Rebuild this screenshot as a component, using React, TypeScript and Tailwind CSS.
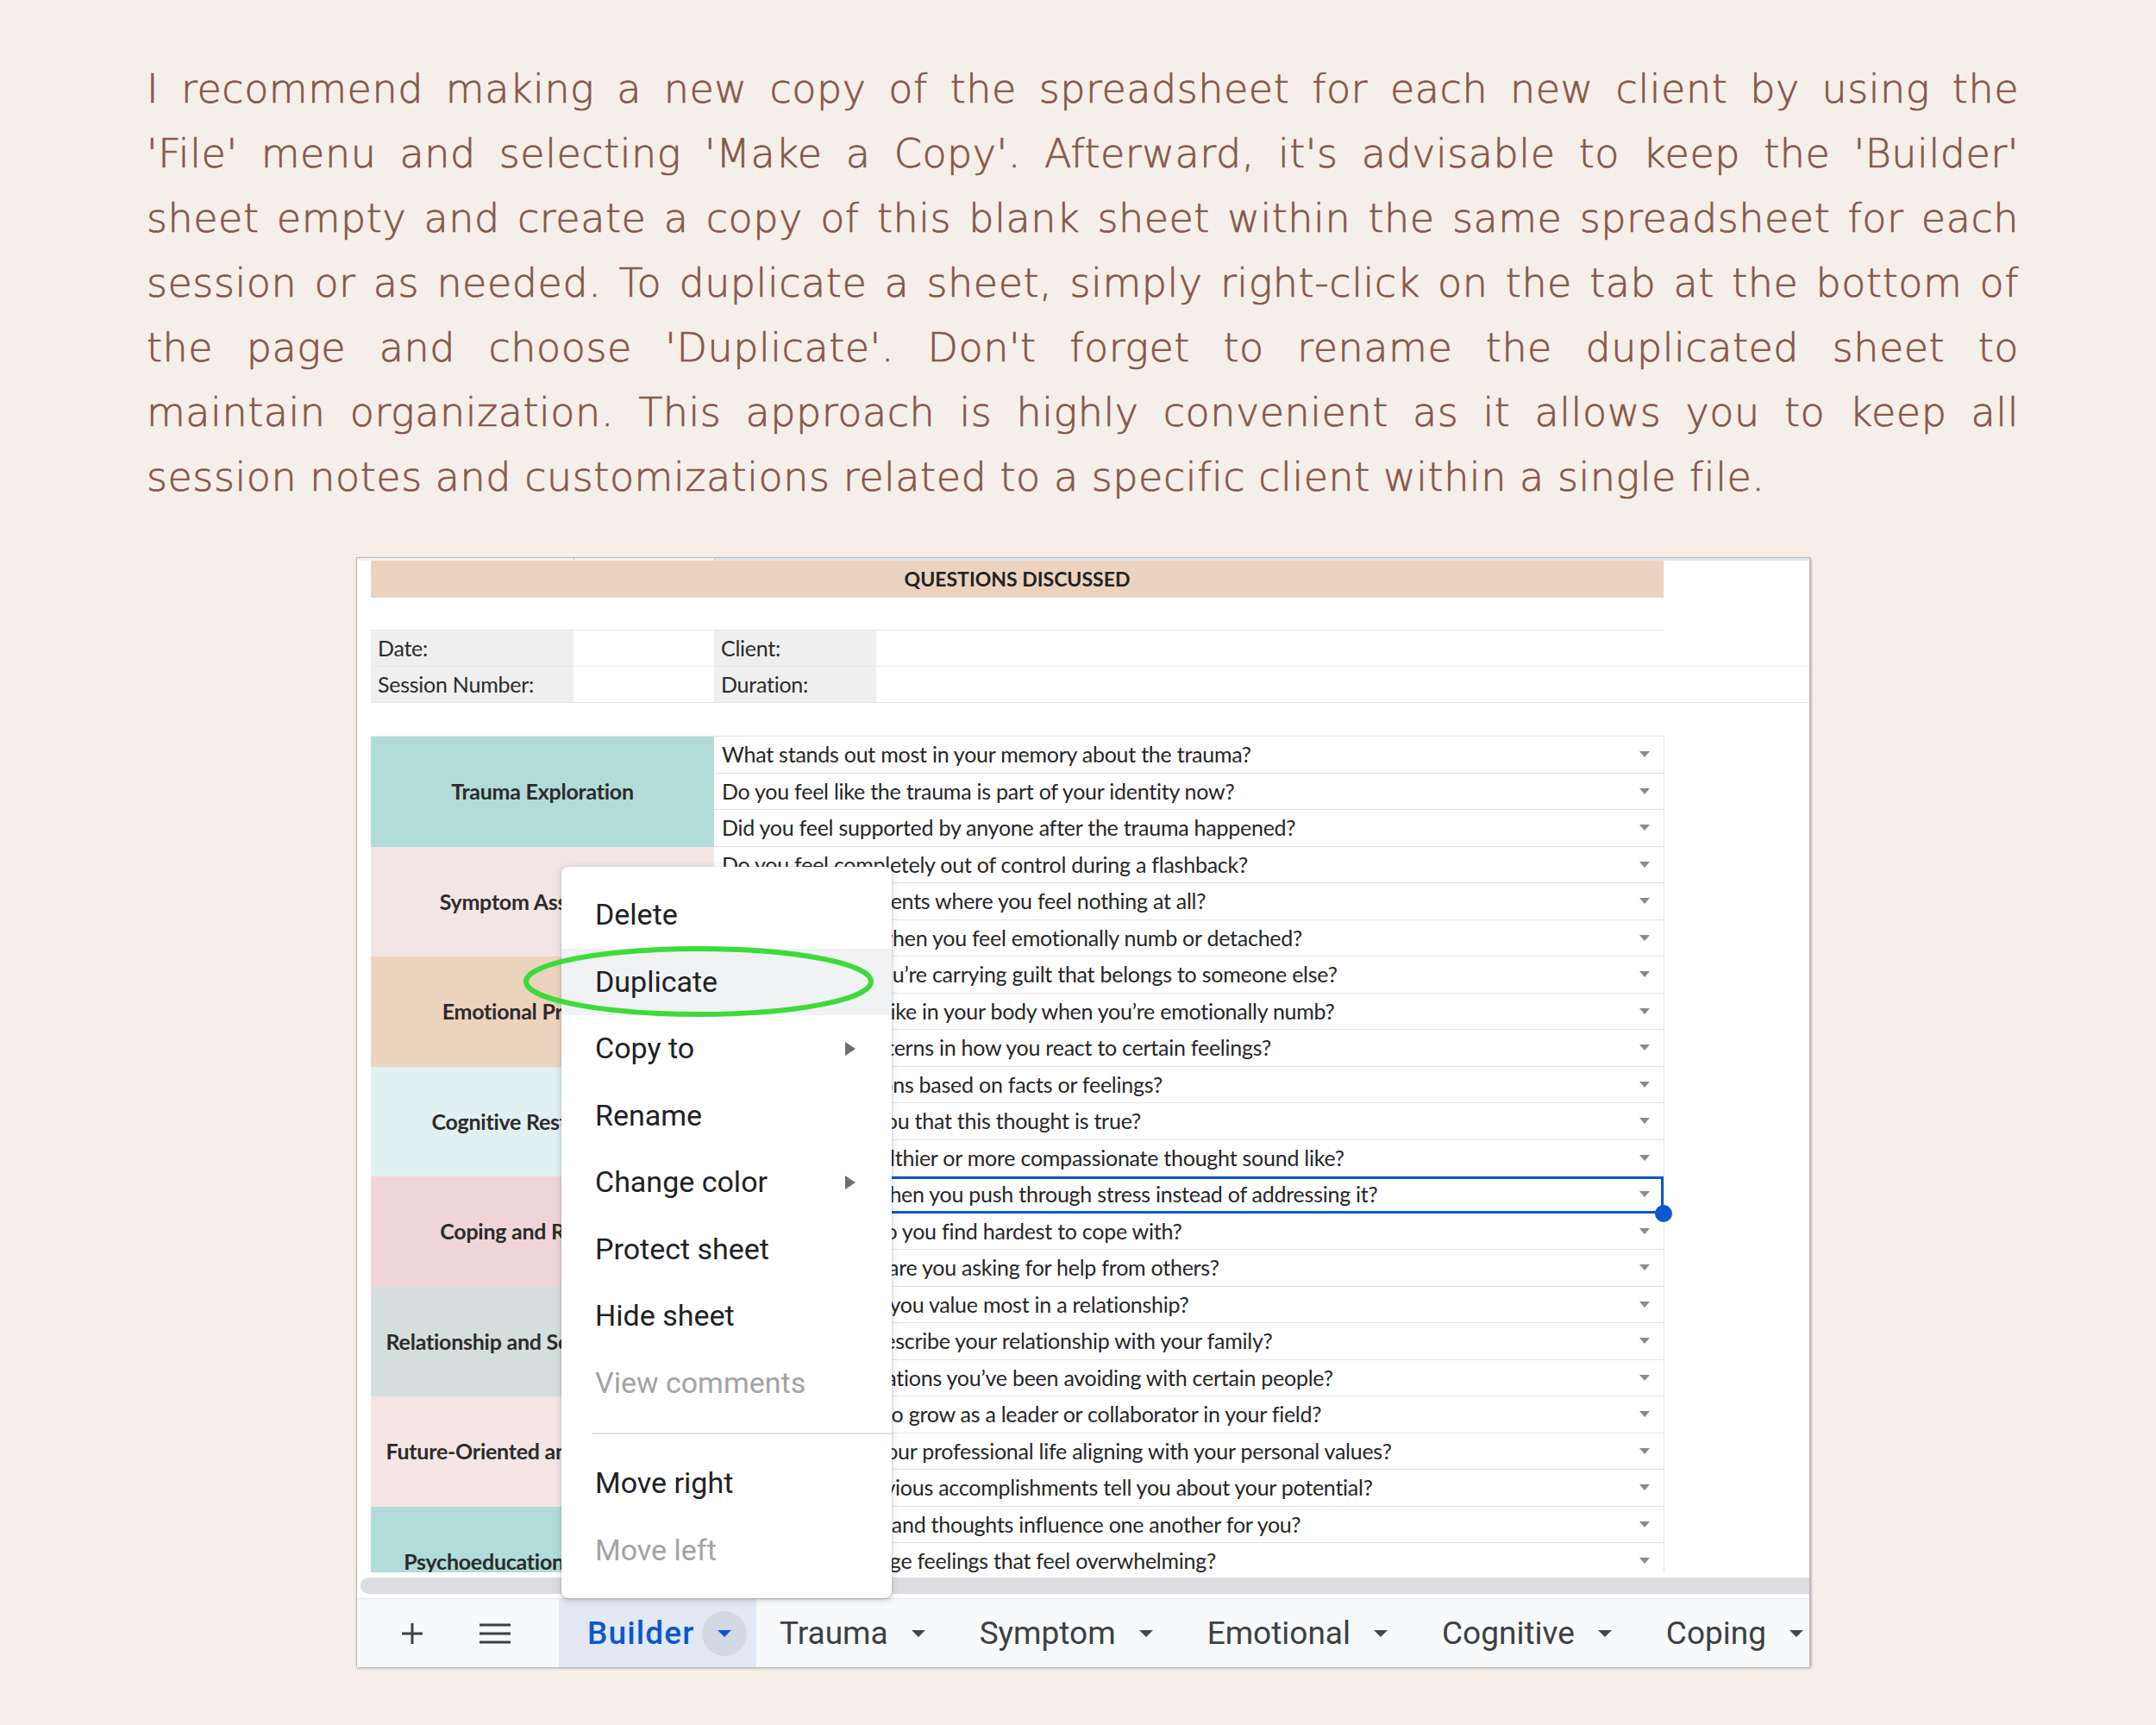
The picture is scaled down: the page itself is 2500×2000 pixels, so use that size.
import React from "react";

type Group = { label: string; bg: string; questions: string[] };

const intro = [
  "I recommend making a new copy of the spreadsheet for each new client by using the",
  "'File' menu and selecting 'Make a Copy'. Afterward, it's advisable to keep the 'Builder'",
  "sheet empty and create a copy of this blank sheet within the same spreadsheet for each",
  "session or as needed. To duplicate a sheet, simply right-click on the tab at the bottom of",
  "the page and choose 'Duplicate'. Don't forget to rename the duplicated sheet to",
  "maintain organization. This approach is highly convenient as it allows you to keep all",
];
const introLast =
  "session notes and customizations related to a specific client within a single file.";

const groups: Group[] = [
  {
    label: "Trauma Exploration",
    bg: "bg-[#b2dcd9]",
    questions: [
      "What stands out most in your memory about the trauma?",
      "Do you feel like the trauma is part of your identity now?",
      "Did you feel supported by anyone after the trauma happened?",
    ],
  },
  {
    label: "Symptom Assessment",
    bg: "bg-[#f4e5e5]",
    questions: [
      "Do you feel completely out of control during a flashback?",
      "Do you have moments where you feel nothing at all?",
      "What do you do when you feel emotionally numb or detached?",
    ],
  },
  {
    label: "Emotional Processing",
    bg: "bg-[#ecd3be]",
    questions: [
      "Do you feel like you\u2019re carrying guilt that belongs to someone else?",
      "What does it feel like in your body when you\u2019re emotionally numb?",
      "Do you notice patterns in how you react to certain feelings?",
    ],
  },
  {
    label: "Cognitive Restructuring",
    bg: "bg-[#e1f0f0]",
    questions: [
      "Are your conclusions based on facts or feelings?",
      "What convinces you that this thought is true?",
      "What would a healthier or more compassionate thought sound like?",
    ],
  },
  {
    label: "Coping and Resilience",
    bg: "bg-[#efd5d7]",
    questions: [
      "Do you observe when you push through stress instead of addressing it?",
      "What situations do you find hardest to cope with?",
      "How comfortable are you asking for help from others?",
    ],
  },
  {
    label: "Relationship and Social Dynamics",
    bg: "bg-[#d5dedc]",
    questions: [
      "What qualities do you value most in a relationship?",
      "How would you describe your relationship with your family?",
      "Are there conversations you\u2019ve been avoiding with certain people?",
    ],
  },
  {
    label: "Future-Oriented and Professional",
    bg: "bg-[#f5e5e5]",
    questions: [
      "How do you plan to grow as a leader or collaborator in your field?",
      "In which ways is your professional life aligning with your personal values?",
      "What do your previous accomplishments tell you about your potential?",
    ],
  },
  {
    label: "Psychoeducation and Insights",
    bg: "bg-[#b2dcd9]",
    questions: [
      "How do emotions and thoughts influence one another for you?",
      "How do you manage feelings that feel overwhelming?",
      "What have you learned about how your nervous system responds?",
    ],
  },
];

const menuItems: { label: string; muted?: boolean; sub?: boolean; active?: boolean }[] = [
  { label: "Delete" },
  { label: "Duplicate", active: true },
  { label: "Copy to", sub: true },
  { label: "Rename" },
  { label: "Change color", sub: true },
  { label: "Protect sheet" },
  { label: "Hide sheet" },
  { label: "View comments", muted: true },
];

const sheetTabs = ["Trauma", "Symptom", "Emotional", "Cognitive", "Coping"];

const cellFont = { fontFamily: "Lato, 'Open Sans', sans-serif" };
const uiFont = { fontFamily: "Roboto, 'Liberation Sans', sans-serif" };

function CellArrow() {
  return (
    <span className="ml-auto mr-[16px] h-0 w-0 shrink-0 border-x-[6px] border-t-[7px] border-x-transparent border-t-[#8a8a8a]" />
  );
}

function QuestionRow({ text, selected }: { text: string; selected?: boolean }) {
  return (
    <div className="relative flex h-[42.5px] items-center border-b border-[#e4e4e4] bg-white pl-[9px] text-[25px] tracking-[-0.01em] text-[#262626]">
      <span className="overflow-hidden whitespace-nowrap">{text}</span>
      <CellArrow />
      {selected && (
        <>
          <div className="pointer-events-none absolute inset-x-0 top-0 bottom-[-1px] border-[3px] border-[#0b57d0]" />
          <div className="absolute right-[-10px] bottom-[-11px] z-10 h-[20px] w-[20px] rounded-full bg-[#0b57d0]" />
        </>
      )}
    </div>
  );
}

function InfoRow({ left, right }: { left: string; right: string }) {
  return (
    <div className="flex h-[42px] border-b border-[#e6e6e6] text-[25px] tracking-[-0.01em] text-[#2a2a2a]">
      <div className="flex w-[235px] items-center bg-[#efefef] pl-[8px]">{left}</div>
      <div className="w-[163px] bg-white" />
      <div className="flex w-[188px] items-center bg-[#efefef] pl-[8px]">{right}</div>
      <div className="w-[913px] bg-white" />
    </div>
  );
}

function ContextMenu() {
  return (
    <div
      className="absolute left-[237px] top-[358px] z-20 h-[848px] w-[383px] rounded-lg bg-white pt-[17px] shadow-[0_2px_6px_2px_rgba(60,64,67,0.15),0_1px_2px_rgba(60,64,67,0.3)]"
      style={uiFont}
    >
      {menuItems.map((item) => (
        <div
          key={item.label}
          className={`flex h-[77.5px] items-center pl-[39px] text-[34px] ${
            item.active ? "bg-[#f1f2f4]" : ""
          } ${item.muted ? "text-[#a3a3a3]" : "text-[#202124]"}`}
        >
          <span>{item.label}</span>
          {item.sub && (
            <span className="ml-auto mr-[42px] h-0 w-0 border-y-[8px] border-l-[12px] border-y-transparent border-l-[#6f6f6f]" />
          )}
        </div>
      ))}
      <div className="flex h-[39px] items-center pl-[35px]">
        <div className="h-[2px] w-full bg-[#e3e3e3]" />
      </div>
      <div className="flex h-[77.5px] items-center pl-[39px] text-[34px] text-[#202124]">
        Move right
      </div>
      <div className="flex h-[77.5px] items-center pl-[39px] text-[34px] text-[#a3a3a3]">
        Move left
      </div>
    </div>
  );
}

function TabBar() {
  return (
    <div
      className="flex h-[80px] items-center overflow-hidden border-t border-[#e6e8eb] bg-[#f8f9fa] text-[37px] text-[#3c4043]"
      style={uiFont}
    >
      <div className="ml-[39px] flex w-[50px] shrink-0 justify-center">
        <svg width="26" height="26" viewBox="0 0 26 26">
          <path d="M13 1v24M1 13h24" stroke="#3c4043" strokeWidth="3" />
        </svg>
      </div>
      <div className="ml-[46px] flex w-[50px] shrink-0 justify-center">
        <svg width="36" height="24" viewBox="0 0 36 24">
          <path d="M0 2h36M0 12h36M0 22h36" stroke="#3c4043" strokeWidth="3" />
        </svg>
      </div>
      <div className="ml-[49px] flex h-full w-[229px] shrink-0 items-center bg-[#e2e8f4] pl-[33px]">
        <span className="font-medium tracking-[0.03em] text-[#0b57d0]">Builder</span>
        <span className="ml-[9px] flex h-[52px] w-[52px] shrink-0 items-center justify-center rounded-full bg-[#d2d9e5]">
          <span className="h-0 w-0 border-x-[8px] border-t-[8px] border-x-transparent border-t-[#0b57d0]" />
        </span>
      </div>
      {sheetTabs.map((name) => (
        <div key={name} className="flex shrink-0 items-center pl-[27px] pr-[36px]">
          <span>{name}</span>
          <span className="ml-[27px] h-0 w-0 border-x-[8px] border-t-[8px] border-x-transparent border-t-[#444746]" />
        </div>
      ))}
    </div>
  );
}

export default function App() {
  return (
    <div className="h-[2000px] w-[2500px] overflow-hidden bg-[#f6efe9]">
      <div
        className="pl-[170px] pr-[159px] pt-[66px] text-[46px] font-light leading-[75px] tracking-[0.012em] text-[#85584a] [-webkit-text-stroke:0.7px_#85584a]"
        style={{ fontFamily: "'DejaVu Sans', 'Open Sans', sans-serif" }}
      >
        {intro.map((line) => (
          <div key={line} className="whitespace-nowrap text-justify [text-align-last:justify]">
            {line}
          </div>
        ))}
        <div className="whitespace-nowrap">{introLast}</div>
      </div>

      <div
        className="relative ml-[413px] mt-[55px] h-[1286px] w-[1686px] border border-[#b8b8b8] bg-white shadow-[1px_2px_3px_rgba(0,0,0,0.35)]"
        style={cellFont}
      >
        {/* frozen header strip */}
        <div className="flex h-[3px] bg-[#f1f3f4]">
          <div className="w-[17px]" />
          <div className="w-[235px] border-r border-[#c8c8c8]" />
          <div className="w-[163px] border-r border-[#c8c8c8]" />
          <div className="flex-1 bg-[#dfe4ee]" />
        </div>

        <div className="pl-[16px]">
          <div className="flex h-[43px] w-[1499px] items-center justify-center bg-[#ecd3bf] text-[23px] font-bold text-[#222]">
            QUESTIONS DISCUSSED
          </div>
          <div className="h-[38px] w-[1499px] border-b border-[#e6e6e6]" />
          <InfoRow left="Date:" right="Client:" />
          <InfoRow left="Session Number:" right="Duration:" />
          <div className="h-[39px] w-[1499px] border-b border-[#e6e6e6]" />
        </div>

        {/* question grid */}
        <div className="h-[969px] overflow-hidden pl-[16px]">
          <div className="w-[1500px] border-r border-[#e4e4e4]">
            {groups.map((g, gi) => (
              <div key={g.label} className="flex">
                <div
                  className={`flex h-[127.5px] w-[398px] shrink-0 items-center justify-center whitespace-nowrap text-[25px] font-bold tracking-[-0.01em] text-[#2b2b2b] ${g.bg}`}
                >
                  {g.label}
                </div>
                <div className="w-[1101px]">
                  {g.questions.map((q, qi) => (
                    <QuestionRow key={q} text={q} selected={gi === 4 && qi === 0} />
                  ))}
                </div>
              </div>
            ))}
          </div>
        </div>

        {/* horizontal scrollbar */}
        <div className="flex h-[30px] items-center bg-white pl-[4px]">
          <div className="h-[19px] w-full rounded-l-full bg-[#dadce0]" />
        </div>

        <TabBar />

        <ContextMenu />

        <svg
          className="pointer-events-none absolute left-[186px] top-[445px] z-30"
          width="420"
          height="92"
          viewBox="0 0 420 92"
        >
          <ellipse cx="210" cy="46" rx="200" ry="38" fill="none" stroke="#3ddb3a" strokeWidth="6" />
        </svg>
      </div>
    </div>
  );
}
